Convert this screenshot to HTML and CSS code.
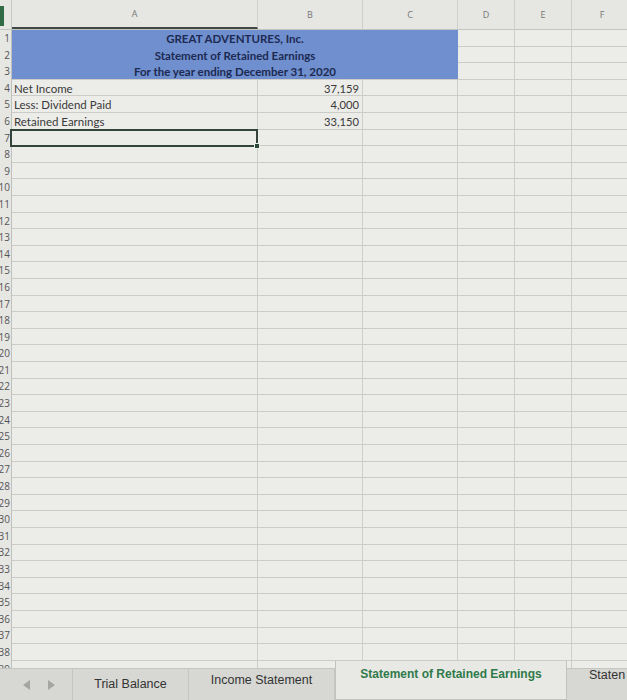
FILE: index.html
```html
<!DOCTYPE html>
<html>
<head>
<meta charset="utf-8">
<link rel="stylesheet" href="styles.css">
</head>
<body>
<div class="sheet">
  <div class="colhead">
    <div class="corner"><span class="mark"></span></div>
    <div class="ch ch-a sel">A</div>
    <div class="ch ch-b">B</div>
    <div class="ch ch-c">C</div>
    <div class="ch ch-d">D</div>
    <div class="ch ch-e">E</div>
    <div class="ch ch-f">F</div>
  </div>
  <div class="body">
    <div class="rownums">
      <div>1</div><div>2</div><div>3</div><div>4</div><div>5</div><div>6</div><div>7</div><div>8</div><div>9</div><div>10</div>
      <div>11</div><div>12</div><div>13</div><div>14</div><div>15</div><div>16</div><div>17</div><div>18</div><div>19</div><div>20</div>
      <div>21</div><div>22</div><div>23</div><div>24</div><div>25</div><div>26</div><div>27</div><div>28</div><div>29</div><div>30</div>
      <div>31</div><div>32</div><div>33</div><div>34</div><div>35</div><div>36</div><div>37</div><div>38</div><div class="last">39</div>
    </div>
    <div class="cells">
      <div class="title">
        <div>GREAT ADVENTURES, Inc.</div>
        <div>Statement of Retained Earnings</div>
        <div>For the year ending December 31, 2020</div>
      </div>
      <div class="label r4">Net Income</div>
      <div class="num r4">37,159</div>
      <div class="label r5">Less: Dividend Paid</div>
      <div class="num r5">4,000</div>
      <div class="label r6">Retained Earnings</div>
      <div class="num r6">33,150</div>
      <div class="selected"><span class="handle"></span></div>
    </div>
  </div>
</div>
<div class="tabs">
  <div class="nav">
    <span class="arrow left"></span>
    <span class="arrow right"></span>
  </div>
  <div class="tab t1">Trial Balance</div>
  <div class="tab t2">Income Statement</div>
  <div class="tab active">Statement of Retained Earnings</div>
  <div class="tab t4">Staten</div>
</div>
</body>
</html>
```

FILE: styles.css
```css
* { box-sizing: border-box; }
html, body {
  margin: 0;
  padding: 0;
  width: 627px;
  height: 700px;
  overflow: hidden;
  background: #e9e9e6;
}
body {
  font-family: "Lato", "Open Sans", sans-serif;
}
.sheet {
  height: 668px;
  overflow: hidden;
  background: #ecece9;
}
.colhead {
  display: flex;
  height: 30px;
  background: #e6e6e3;
  border-bottom: 1px solid #c3c3bf;
}
.corner {
  width: 12px;
  flex: none;
  position: relative;
  border-right: 1px solid #c9c9c5;
}
.corner .mark {
  position: absolute;
  left: 0;
  top: 6px;
  width: 4px;
  height: 20px;
  background: #2f6b45;
}
.ch {
  flex: none;
  text-align: center;
  font-family: "Open Sans", sans-serif;
  font-size: 9px;
  color: #777;
  line-height: 30px;
  border-right: 1px solid #cfcfcb;
}
.ch.sel {
  border-bottom: 2px solid #3f4a45;
  line-height: 28px;
}
.ch-a { width: 246px; }
.ch-b { width: 105px; }
.ch-c { width: 95px; }
.ch-d { width: 57px; }
.ch-e { width: 57px; }
.ch-f { width: 60px; border-right: none; }

.body {
  display: flex;
}
.rownums {
  width: 12px;
  flex: none;
  height: 638px;
  background: #e6e6e3;
  border-right: 1px solid #c0c0bc;
  overflow: hidden;
}
.rownums div {
  height: 16.6px;
  line-height: 16.6px;
  font-family: "Open Sans", sans-serif;
  font-size: 10px;
  color: #555;
  text-align: right;
  padding-right: 1px;
  white-space: nowrap;
  direction: rtl;
}
.rownums .last {
  height: 10px;
  overflow: hidden;
  line-height: 16px;
}
.cells {
  flex: 1;
  display: grid;
  grid-template-columns: 246px 105px 95px 57px 57px 60px;
  grid-auto-rows: 16.6px;
  height: 650px;
  background-color: #ecece9;
  background-image:
    repeating-linear-gradient(to bottom, transparent 0, transparent 15.6px, #cbcbc7 15.6px, #cbcbc7 16.6px),
    linear-gradient(to right,
      transparent 245px, #cdcdc9 245px, #cdcdc9 246px, transparent 246px,
      transparent 350px, #cdcdc9 350px, #cdcdc9 351px, transparent 351px,
      transparent 445px, #cdcdc9 445px, #cdcdc9 446px, transparent 446px,
      transparent 502px, #cdcdc9 502px, #cdcdc9 503px, transparent 503px,
      transparent 559px, #cdcdc9 559px, #cdcdc9 560px, transparent 560px);
}
.title {
  grid-column: 1 / 4;
  grid-row: 1 / 4;
  background: #6f8fcf;
  color: #1d2a52;
  font-weight: 700;
  font-size: 11.5px;
  text-align: center;
  display: flex;
  flex-direction: column;
  justify-content: space-around;
  padding: 1px 0 0;
  border-bottom: 1px solid #cbcbc7;
}
.title div { line-height: 16.6px; }
.label {
  grid-column: 1;
  font-size: 11.5px;
  color: #3a3a3a;
  padding-left: 2px;
  line-height: 17px;
}
.num {
  grid-column: 2;
  font-size: 11.2px;
  color: #3a3a3a;
  text-align: right;
  padding-right: 4px;
  line-height: 17px;
}
.r4 { grid-row: 4; }
.r5 { grid-row: 5; }
.r6 { grid-row: 6; }
.selected {
  grid-column: 1;
  grid-row: 7;
  margin: -1px 0 -1px -2px;
  border: 2px solid #33443b;
  position: relative;
}
.handle {
  position: absolute;
  right: -4px;
  bottom: -4px;
  width: 6px;
  height: 6px;
  background: #2c4a3a;
  border: 1px solid #ecece9;
}

.tabs {
  height: 32px;
  display: flex;
  align-items: stretch;
  background: #d7d8d4;
  border-top: 1px solid #c4c4c0;
  font-family: "Liberation Sans", Arial, sans-serif;
  font-size: 12.5px;
  color: #333;
}
.nav {
  width: 73px;
  flex: none;
  display: flex;
  align-items: center;
  justify-content: center;
  gap: 18px;
  padding-left: 6px;
  border-right: 1px solid #c6c6c2;
}
.arrow {
  width: 0;
  height: 0;
  border-top: 5px solid transparent;
  border-bottom: 5px solid transparent;
}
.arrow.left { border-right: 7px solid #a5a6a3; }
.arrow.right { border-left: 7px solid #a5a6a3; }
.tab {
  flex: none;
  display: flex;
  align-items: center;
  justify-content: center;
  border-right: 1px solid #c6c6c2;
  padding-bottom: 2px;
}
.t1 { width: 116px; }
.t2 { width: 146px; padding-bottom: 10px; }
.active {
  width: 232px;
  background: #e8e8e5;
  color: #2f7a4a;
  font-weight: 700;
  font-size: 12px;
  margin-top: -8px;
  padding-bottom: 12px;
  border: 1px solid #c2c2be;
  border-top: none;
}
.t4 {
  justify-content: flex-start;
  padding-left: 22px;
  padding-bottom: 20px;
  flex: 1;
  border-right: none;
  overflow: hidden;
  white-space: nowrap;
}
```
